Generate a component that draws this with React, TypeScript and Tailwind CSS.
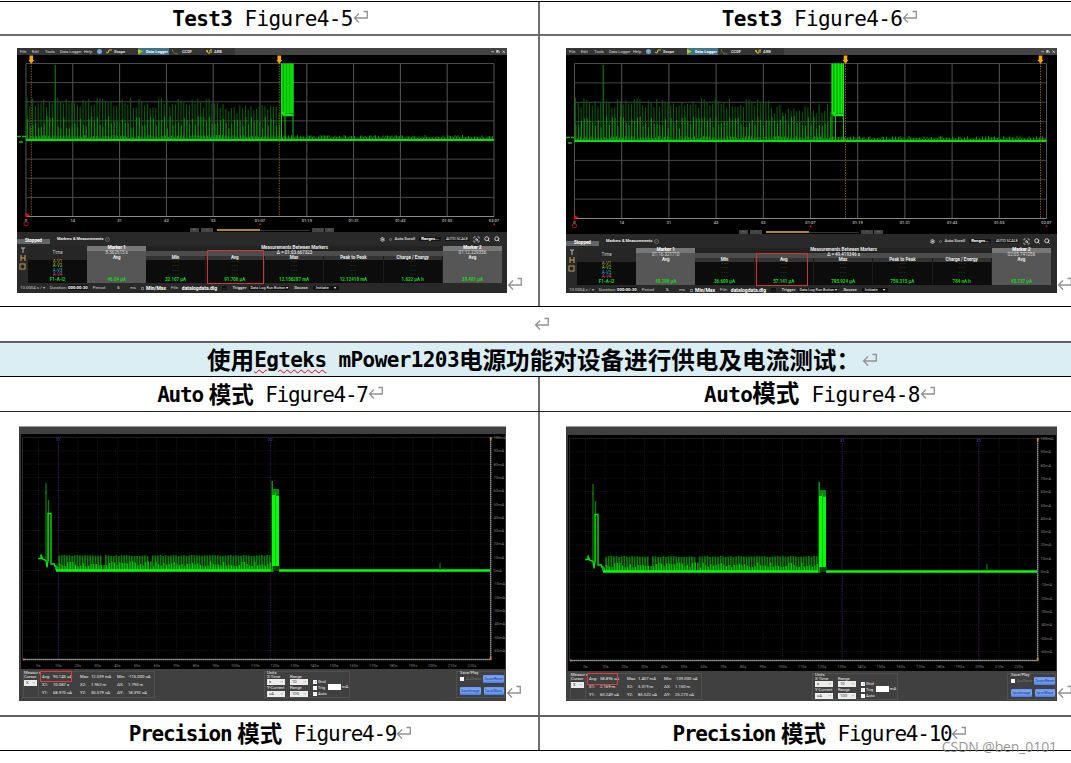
import type { ReactNode } from "react";
import { Search, Settings, ChevronDown, Minus, Copy, X, ScanSearch } from "lucide-react";

// Small deterministic generator so the traces look the same on every load
function noise(seed: number) {
  let s = seed;
  return () => {
    s = (s * 16807) % 2147483647;
    return s / 2147483647;
  };
}

function ReturnMark({ className = "" }: { className?: string }) {
  return (
    <svg width="16" height="14" viewBox="0 0 16 14" className={`shrink-0 ${className}`}>
      <path
        d="M10.5 1.5h3.8v6.5H1.5M6 3.5L1.5 8L6 12.5"
        fill="none"
        stroke="#929292"
        strokeWidth="1.3"
      />
    </svg>
  );
}

interface TextProps {
  children: ReactNode;
  bold?: boolean;
  tight?: boolean;
}

function Mono({ children, bold = false, tight = false }: TextProps) {
  return (
    <span
      className={`whitespace-pre font-['DejaVu_Sans_Mono','Noto_Sans_CJK_SC',monospace] text-[21px] ${
        tight ? "tracking-[-1.25px]" : "tracking-[-0.6px]"
      } ${bold ? "font-bold" : ""}`}
    >
      {children}
    </span>
  );
}

function Han({ children, tight = false }: TextProps) {
  return (
    <span
      className={`font-['Noto_Sans_CJK_SC',sans-serif] font-bold ${
        tight ? "text-[22.5px]" : "text-[23.6px]"
      }`}
    >
      {children}
    </span>
  );
}

interface CaptionProps {
  name: string;
  mode?: boolean;
  gap?: boolean;
  figure: string;
}

function Caption({ name, mode, gap, figure }: CaptionProps) {
  return (
    <div className="flex h-full items-center justify-center pt-0.5 leading-none text-black">
      <Mono bold tight={gap}>
        {name}
      </Mono>
      {mode && (
        <span className={`-mt-1 ${gap ? "ml-1.5" : ""}`}>
          <Han tight={gap}>模式</Han>
        </span>
      )}
      <Mono tight={gap}> {figure}</Mono>
      <ReturnMark className="-mt-1" />
    </div>
  );
}

/* ---------- Data logger ---------- */

interface LoggerProps {
  wide?: boolean;
  left: number;
  right: number;
  bottom: number;
  markers: number[];
  spike: number;
  burst: number;
  seed: number;
  time1: string;
  time2: string;
  delta: string;
  values: string[];
}

const timeLabels = ["0", "14", "31", "42", "53", "01:07", "01:19", "01:31", "01:42", "01:55", "02:07"];

function LoggerPlot({ wide, left, right, bottom, markers, spike, burst, seed }: LoggerProps) {
  const width = wide ? 491 : 490;
  const height = wide ? 173 : 171;
  const top = 8.5;
  const base = wide ? 86 : 85;
  const colStep = (right - left) / 10;
  const rowStep = (bottom - top) / 8;
  const rand = noise(seed);

  let tall = "";
  let short = "";
  let floor = "";
  for (let x = left + 1; x < burst; x += 2.8) {
    const edge = x > burst - 60 ? 6 : 0;
    tall += `M${x.toFixed(1)} ${base}V${(43 + edge + rand() * 10).toFixed(1)}`;
    short += `M${(x + 0.4).toFixed(1)} ${base}V${(61 + rand() * 13).toFixed(1)}`;
  }
  for (let x = left; x < right; x += 1.5) {
    floor += `M${x.toFixed(1)} ${base}v${(-2 - rand() * 3).toFixed(1)}`;
  }

  return (
    <svg width={width} height={height} className="block shrink-0 bg-black">
      {Array.from({ length: 11 }, (_, i) => (
        <line
          key={`c${i}`}
          x1={left + i * colStep}
          x2={left + i * colStep}
          y1={top}
          y2={bottom}
          stroke="#555"
          strokeWidth="1"
        />
      ))}
      {Array.from({ length: 9 }, (_, i) => (
        <line
          key={`r${i}`}
          x1={left}
          x2={right}
          y1={top + i * rowStep}
          y2={top + i * rowStep}
          stroke={i === 8 ? "#888" : "#484848"}
          strokeWidth="1"
        />
      ))}
      <path d={tall} stroke="#075c07" strokeWidth="1.1" />
      <path d={short} stroke="#0a940a" strokeWidth="1" />
      <path d={floor} stroke="#0b980b" strokeWidth="1" />
      <path d={`M${spike} ${base}V10`} stroke="#087808" strokeWidth="1.2" />
      <path d={`M${left} ${base}H${right}`} stroke="#0edb0e" strokeWidth="2" />
      <path
        d={`M0 ${base - 3.5}H${left}M2 ${base + 2}h5`}
        stroke="#10b510"
        strokeWidth="1.5"
        strokeDasharray="4 1"
      />
      <rect x={burst} y={top} width="12.5" height="50" fill="#08b808" />
      <path
        d={[0.7, 4, 7, 10, 12].map((d) => `M${burst + d} ${top}v50`).join("")}
        stroke="#0cf20c"
        strokeWidth="1.1"
      />
      <path d={`M${burst} 58.5h3v1.5h9.5`} fill="none" stroke="#08ec08" strokeWidth="2.5" />
      <path
        d={`M${burst + 0.5} 59V${base}M${burst + 4} 59V${base}M${burst + 12} 59V${base}`}
        stroke="#08c908"
        strokeWidth="1"
      />
      {markers.map((x) => (
        <g key={x}>
          <path d={`M${x} 8V${bottom}`} stroke="#965c08" strokeWidth="1" strokeDasharray="1.4 1.2" />
          <path d={`M${x - 1.8} 0.5h3.6v4.5h1.2L${x} 8.8L${x - 3} 5h1.2z`} fill="#f5a313" />
        </g>
      ))}
      <path d={`M${left - 0.5} ${bottom - 3.5}l4.5 2.5l-4.5 2z`} fill="#f00" />
      {timeLabels.map((t, i) => (
        <text
          key={t}
          x={left + i * colStep}
          y={bottom + 5}
          fontSize="4"
          fontWeight="bold"
          textAnchor="middle"
          fill="#aaa"
        >
          {t}
        </text>
      ))}
      <rect x={left - 2} y={bottom + 5.5} width="4" height="3.5" rx="1" fill="none" stroke="#a51414" />
      <rect x={left + 5 * colStep - 0.7} y={bottom + 7} width="1.6" height="1.6" fill="#e11" />
      <rect x={right - 0.7} y={bottom + 7} width="1.6" height="1.6" fill="#e11" />
    </svg>
  );
}

function MenuBar() {
  return (
    <div className="flex h-[7px] shrink-0 items-center whitespace-nowrap bg-[#444] text-[4px] leading-none text-[#ddd]">
      <div className="flex h-full w-[218px] shrink-0 items-center bg-[#343434] pl-[3px]">
        <span className="w-3">File</span>
        <span className="w-[13px]">Edit</span>
        <span className="w-[15px]">Tools</span>
        <span className="w-[24px]">Data Logger</span>
        <span className="w-[13px]">Help</span>
        <span className="size-[5px] rounded-full bg-[#6eacd2]" />
        <svg width="6" height="5" className="ml-1">
          <path d="M0 3l2 1l1-3h3" stroke="#d5c622" fill="none" />
        </svg>
        <span className="ml-0.5 w-[24px] font-bold">Scope</span>
        <div className="flex h-full w-[31px] items-center bg-[#427487] font-bold text-white">
          <svg width="5" height="5" className="mr-[3px]">
            <path d="M0 0l5 2.5l-5 2.5z" fill="#b4cc20" />
          </svg>
          Data Logger
        </div>
        <svg width="6" height="6" className="ml-[3px] mr-1">
          <path d="M0 0q1 5 6 5" stroke="#777c1a" fill="none" />
        </svg>
        <span className="w-6 font-bold">CCDF</span>
        <svg width="6" height="5" className="mr-0.5">
          <path d="M0 3l1-2l1 3h2v-3h2v3" stroke="#d5c622" fill="none" />
        </svg>
        <span className="font-bold">ARB</span>
      </div>
      <div className="ml-auto flex gap-[2px] pr-[2px] text-white">
        <Minus size={3.5} strokeWidth={4} />
        <Copy size={3.5} strokeWidth={4} />
        <X size={3.5} strokeWidth={4} />
      </div>
    </div>
  );
}

function ScrollStrip() {
  return (
    <div className="flex h-[6px] shrink-0 items-center bg-black pl-[173px] pt-[2px] text-[4px] leading-none text-[#aaa]">
      <span className="h-[4px] w-[9px] bg-[#444] text-center">‹‹</span>
      <span className="ml-0.5 h-[4px] w-[12px] bg-[#444] text-center">‹</span>
      <span className="ml-1 h-[2px] w-[43px] bg-[#b08a18]" />
      <span className="h-px w-[50px] bg-[#333]" />
      <span className="ml-[2px] h-[4px] w-[12px] bg-[#444] text-center">›</span>
      <span className="ml-px h-[4px] w-[9px] bg-[#444] text-center">››</span>
    </div>
  );
}

const channels = [
  { label: "A-V1", text: "text-[#c99d22]", dash: "text-[#7c6416]" },
  { label: "A-V2", text: "text-[#83d928]", dash: "text-[#527f16]" },
  { label: "A-V3", text: "text-[#29aed2]", dash: "text-[#18748c]" },
  { label: "A-V4", text: "text-[#d04d9c]", dash: "text-[#7b2b58]" },
];

const measureColumns = ["Min", "Avg", "Max", "Peak to Peak", "Charge / Energy"];

function ValueColumn({ title, value, shade }: { title: string; value: string; shade?: boolean }) {
  return (
    <div className={`flex flex-1 flex-col items-center ${shade ? "" : "border-r border-[#1c1c1c]"}`}>
      <div className={`h-[4.5px] w-full text-center font-bold text-[#eee] ${shade ? "" : "bg-[#333]"}`}>
        {title}
      </div>
      {channels.map((c) => (
        <div key={c.label} className={`h-[4.4px] ${shade ? "text-transparent" : c.dash}`}>
          - - -
        </div>
      ))}
      <div className="h-[4.6px] font-bold text-[#15d815]">{value}</div>
    </div>
  );
}

function MarkerColumn({ name, time, value }: { name: string; time: string; value: string }) {
  return (
    <div className="flex w-[59.2px] flex-col bg-[#565656]">
      <div className="h-[5px] bg-[#777] text-center font-bold text-white">{name}</div>
      <div className="h-[4.5px] text-center text-[#ddd]">{time}</div>
      <ValueColumn title="Avg" value={value} shade />
    </div>
  );
}

function MeasurePanel({ wide, time1, time2, delta, values }: LoggerProps) {
  return (
    <div className="flex h-[61px] shrink-0 flex-col whitespace-nowrap bg-[#292929] text-[4.5px] leading-[4.5px] text-[#ccc]">
      <div className="flex h-[14px] shrink-0 items-center">
        <span className="mt-1 h-[5px] w-[33px] bg-[#656565] text-center font-bold text-white">Stopped</span>
        <span className="ml-[7px] text-[4px] font-bold text-[#eee]">Markers &amp; Measurements</span>
        <ChevronDown size={5} className="ml-0.5 rounded-full border border-[#666]" />
        <div className="ml-auto flex items-center gap-[4px] pr-[7px] text-[4.2px]">
          <Settings size={5} strokeWidth={4} />
          <span className="size-[3px] rounded-full border border-[#777]" />
          <span className="-ml-0.5 font-bold">Auto Scroll</span>
          <span className="bg-[#151515] px-[2px] font-bold text-white">Ranges...</span>
          <span className="bg-[#151515] px-px text-[3.8px] text-white">AUTO SCALE</span>
          <ScanSearch size={7} strokeWidth={3} />
          <Search size={6} strokeWidth={4} />
          <Search size={6} strokeWidth={4} />
        </div>
      </div>
      <div className="flex h-[37px] shrink-0">
        <div className="flex w-[11px] flex-col items-center justify-around pb-3">
          <svg width="6" height="6">
            <path d="M1 1h4M3 1v5" stroke="#bbb" />
          </svg>
          <svg width="6" height="6">
            <path d="M1 0v6M5 0v6M1 3h4" stroke="#c8a05a" />
          </svg>
          <svg width="7" height="7">
            <rect x="1" y="1" width="5" height="5" fill="#222" stroke="#b89b60" />
          </svg>
        </div>
        <div className="flex w-[474px] bg-[#0c0c0c]">
          <div className="flex w-[59.2px] flex-col items-center">
            <div className="h-[14px] w-full bg-[#262626] pt-[5px] text-center">Time</div>
            {channels.map((c) => (
              <div key={c.label} className={`h-[4.4px] ${c.text}`}>
                {c.label}
              </div>
            ))}
            <div className="font-bold text-[#15d815]">F1-A-I2</div>
          </div>
          <MarkerColumn name="Marker 1" time={time1} value={values[0]} />
          <div className="flex flex-1 flex-col">
            <div className="h-[5px] bg-[#222] text-center font-bold text-[#eee]">
              Measurements Between Markers
            </div>
            <div className="h-[4.5px] bg-[#4c4c4c] text-center text-white">Δ = {delta}</div>
            <div className="flex">
              {measureColumns.map((m, i) => (
                <ValueColumn key={m} title={m} value={values[i + 1]} />
              ))}
            </div>
          </div>
          <MarkerColumn name="Marker 2" time={time2} value={values[6]} />
        </div>
      </div>
      <div className="flex h-[10px] shrink-0 items-center gap-[5px] pl-[3px] text-[4.3px]">
        <span>10.0004 x / ▾</span>
        <span>
          Duration: <b className="bg-[#111] text-white">000:00:30</b>
        </span>
        <span>Period:</span>
        <span className="w-[14px] text-center text-white">5</span>
        <span>ms</span>
        <span className="size-[3px] border border-[#777]" />
        <b className="-ml-[3px] text-[5px] text-white">Min/Max</b>
        <span>File:</span>
        <b className="-ml-0.5 text-[5px] text-white">datalogdata.dlg</b>
        <span className="bg-[#111] px-px">...</span>
        <span className="font-bold">Trigger</span>
        <span className="-ml-0.5 bg-[#111] px-px text-[3.8px] text-white">Data Log Run Button ▾</span>
        <span className="font-bold">Source</span>
        <span className="bg-[#111] px-[3px] text-white">
          Initiate <span className="pl-[4px]">▾</span>
        </span>
      </div>
      {/* Highlight around the average */}
      <div
        className={`absolute border border-[#d03434] ${
          wide
            ? "left-[190px] top-[205px] h-[33px] w-[52px]"
            : "left-[190px] top-[202px] h-[34px] w-[57px]"
        }`}
      />
    </div>
  );
}

function DataLogger(props: LoggerProps) {
  return (
    <div
      className={`relative flex h-[245px] shrink-0 flex-col overflow-hidden bg-[#292929] font-[Roboto,sans-serif] ${
        props.wide ? "w-[491px]" : "w-[490px]"
      }`}
    >
      <MenuBar />
      <LoggerPlot {...props} />
      <ScrollStrip />
      <MeasurePanel {...props} />
    </div>
  );
}

/* ---------- mPower1203 ---------- */

interface PowerProps {
  wide?: boolean;
  markers: number[];
  readings: string[][];
}

function PowerPlot({ wide, markers }: PowerProps) {
  const width = wide ? 491 : 487;
  const rand = noise(91);
  const zero = 136.5;

  let comb = "";
  let low = "";
  for (let x = 37.5; x < 252; x += 2.6) {
    if (rand() > 0.04) comb += `M${x.toFixed(1)} ${zero}V${(121 + rand()).toFixed(1)}`;
    low += `M${(x + 0.8).toFixed(1)} ${zero}V${(127.5 + rand() * 5).toFixed(1)}`;
  }

  return (
    <svg width={width} height={wide ? 236 : 235} className="block shrink-0 bg-[#383838]">
      <rect x="2" y="0" width={width - 3} height="236" fill="#000" />
      <path d={`M3.5 226V3.5H${wide ? 485 : 482}`} fill="none" stroke="#262626" />
      {Array.from({ length: 23 }, (_, i) => (
        <g key={i}>
          <line
            x1={19.5 + i * 19.7}
            x2={19.5 + i * 19.7}
            y1="4"
            y2="225"
            stroke="#141414"
            strokeDasharray="1 1"
          />
          <text x={19.5 + i * 19.7} y="233" fontSize="4" textAnchor="middle" fill="#808080">
            {i * 10}s
          </text>
        </g>
      ))}
      {Array.from({ length: 17 }, (_, i) => (
        <g key={i}>
          <line
            x1="4"
            x2="471"
            y1={3.5 + i * 13.3}
            y2={3.5 + i * 13.3}
            stroke="#141414"
            strokeDasharray="1 1"
          />
          <text x="474.5" y={5 + i * 13.3} fontSize="4" fill="#808080">
            {100 - i * 10}mA
          </text>
        </g>
      ))}
      {markers.map((x, i) => (
        <g key={x}>
          <path d={`M${x} 8V225`} stroke="#34104f" strokeWidth="1" strokeDasharray="1.5 1" />
          <text x={x} y="7" fontSize="3.6" fontWeight="bold" textAnchor="middle" fill="#5a2296">
            X{i + 1}
          </text>
        </g>
      ))}
      <path d="M471.7 4V225.5H4" fill="none" stroke="#777" strokeWidth="1" />
      <path
        d="M471.7 4V225.5H4"
        fill="none"
        stroke="#aaa"
        strokeWidth="1.8"
        strokeDasharray="0.6 1.4"
      />
      <path d="M471.7 3v3M471.7 223v3M4 225.5h2" stroke="#e88410" strokeWidth="1.6" />
      <path d={comb} stroke="#078007" strokeWidth="1.7" />
      <path d={low} stroke="#05c805" strokeWidth="1.3" />
      <path d="M27 127V57M29.5 127V75" stroke="#087a08" strokeWidth="1.3" />
      <path d="M27 60V49M29.5 76V66" stroke="#087a08" strokeWidth="1.3" />
      <path
        d="M19 124.5h3v-4l1.5 4.5l3.5 1.5l1 7l1-7V79.5h3V130h3.5v2h1.5v4"
        fill="none"
        stroke="#05df05"
        strokeWidth="1.4"
      />
      <path d={`M37 ${zero}H252.5M260 ${zero}H471`} stroke="#00ff00" strokeWidth="2.6" />
      <path d="M253.2 138V47" stroke="#07b307" strokeWidth="1.3" />
      <rect x="254" y="55" width="6" height="11" fill="#078707" />
      <rect x="253" y="61" width="3" height="71" fill="#00ff00" />
      <rect x="257" y="62" width="3" height="70" fill="#00ff00" />
      <rect x="256" y="58" width="1" height="74" fill="#08b908" />
      <path d="M254 138v-6M256 137v-5M258 137v-5M260 137v-6" stroke="#08a808" strokeWidth="0.8" />
      <path d="M421 136v-7M426 136v-2" stroke="#089008" strokeWidth="1" />
    </svg>
  );
}

function Select({ value, className = "w-[18px]" }: { value: string; className?: string }) {
  return (
    <div className={`flex h-[6px] items-center justify-between bg-[#ececec] px-[2px] text-[#333] ${className}`}>
      {value}
      <ChevronDown size={3.5} />
    </div>
  );
}

function BlueButton({ children }: { children: ReactNode }) {
  return (
    <div className="flex h-[8px] w-[21px] items-center justify-center rounded-[1px] bg-gradient-to-b from-[#6796f3] via-[#82acff] to-[#477be9] text-[3.8px] text-[#172c68]">
      {children}
    </div>
  );
}

function PowerControls({ wide, readings }: PowerProps) {
  return (
    <div className="relative flex h-[32px] shrink-0 justify-between whitespace-nowrap bg-[#404040] px-[4px] pt-[2px] text-[4.2px] leading-[4px] text-[#eee]">
      <div className="flex h-[27px] w-[132px] border border-[#505050]">
        <div className="w-[14px]">
          <div className="-mt-px">Measure</div>
          <div>Cursor</div>
          <Select value="X" className="mt-px w-[13px]" />
        </div>
        <div className="grid flex-1 grid-cols-[38px_37px_1fr] grid-rows-3 items-center border-l border-[#505050] pl-[3px] pt-px">
          {readings.map(([name, value]) => (
            <div key={name} className="flex">
              <span className="w-[11px]">{name}:</span>
              <span>{value}</span>
            </div>
          ))}
        </div>
      </div>
      <div
        className={`flex h-[27px] w-[86px] gap-[5px] border border-[#505050] px-[2px] ${
          wide ? "ml-px" : "ml-[3px]"
        }`}
      >
        <div>
          <div className="-mt-px h-[3px]">Units</div>
          <div className="h-[5px] pt-px">X-Time</div>
          <Select value="s" />
          <div className="h-[6px] pt-px">Y-Current</div>
          <Select value="uA" />
        </div>
        <div className="pt-[2px]">
          <div className="h-[5px] pt-px">Range</div>
          <Select value="10" />
          <div className="h-[6px] pt-px">Range</div>
          <Select value="100" />
        </div>
        <div className="flex flex-col justify-end gap-[2px] pb-px">
          {["Grid", "Trig", "Auto"].map((name) => (
            <div key={name} className="flex items-center gap-px">
              <span className="flex size-[4px] items-center justify-center bg-white text-[4px] text-[#3355bb]">
                {name === "Grid" ? "✓" : ""}
              </span>
              {name}
            </div>
          ))}
        </div>
        <div className="-ml-1 flex items-center pt-1">
          <span className="mr-px h-[6px] w-[13px] bg-white" />
          mA
        </div>
      </div>
      <div className="-mr-[3px] h-[27px] w-[49px] border border-[#505050] pl-[3px]">
        <div className="-mt-px h-[3px]">Save/Play</div>
        <div className="flex items-center pt-px">
          <span className="mr-[2px] size-[4px] bg-white" />
          <span className="w-[18px] text-[#737373]">AutSave</span>
          <BlueButton>ZoomReset</BlueButton>
        </div>
        <div className="flex gap-[3px] pt-[4px]">
          <BlueButton>SaveImage</BlueButton>
          <BlueButton>SaveWave</BlueButton>
        </div>
      </div>
      <div
        className={`absolute border border-[#e03a3a] ${
          wide ? "left-[21px] top-[2px] h-[12px] w-[31px]" : "left-[21px] top-[2px] h-[11px] w-[32px]"
        }`}
      />
    </div>
  );
}

function PowerScope(props: PowerProps) {
  return (
    <div
      className={`flex h-[275px] shrink-0 flex-col overflow-hidden bg-[#404040] font-[Roboto,sans-serif] ${
        props.wide ? "w-[491px]" : "w-[487px]"
      }`}
    >
      <div className={`shrink-0 border-t border-[#999] bg-[#404040] ${props.wide ? "h-[9px]" : "h-[8px]"}`} />
      <PowerPlot {...props} />
      <PowerControls {...props} />
    </div>
  );
}

/* ---------- Document ---------- */

function Row({ left, right, className }: { left: ReactNode; right: ReactNode; className: string }) {
  return (
    <div className={`flex shrink-0 ${className}`}>
      <div className="w-[540px] shrink-0 border-r-2 border-[#6d6d6d] pl-[3px]">{left}</div>
      <div className="w-[560px] shrink-0">{right}</div>
    </div>
  );
}

export default function App() {
  return (
    <div className="relative flex h-[763px] w-[1071px] flex-col overflow-hidden bg-white pt-px">
      <Row
        className="h-[35px] border-b-2 border-t border-b-[#6d6d6d] border-t-black"
        left={<Caption name="Test3" figure="Figure4-5" />}
        right={<Caption name="Test3" figure="Figure4-6" />}
      />
      <Row
        className="h-[271px] border-b border-black"
        left={
          <div className="flex items-end pl-[14px] pt-3">
            <DataLogger
              left={9}
              right={477}
              bottom={161.5}
              markers={[14.3, 262.3]}
              spike={38.3}
              burst={264}
              seed={17}
              time1="8.562615 s"
              time2="01:12.229356"
              delta="01:03.667323"
              values={["46.04 µA", "32.107 µA", "91.706 µA", "12.156287 mA", "12.12418 mA", "1.622 µA h", "38.481 µA"]}
            />
            <ReturnMark className="mb-0.5" />
          </div>
        }
        right={
          <div className="flex items-end pl-[26px] pt-3">
            <DataLogger
              wide
              left={8.5}
              right={480.5}
              bottom={163.5}
              markers={[279.5, 474.5]}
              spike={37.3}
              burst={265.5}
              seed={43}
              time1="01:16.321710"
              time2="02:05.741056"
              delta="49.419346 s"
              values={["45.299 µA", "36.609 µA", "57.141 µA", "795.924 µA", "759.315 µA", "784 nA h", "45.737 µA"]}
            />
            <ReturnMark className="mb-0.5" />
          </div>
        }
      />
      <div className="flex h-[34px] shrink-0 items-center justify-center pl-[13px]">
        <ReturnMark />
      </div>
      <div className="flex h-[36px] shrink-0 items-center border-b border-t-2 border-b-black border-t-[#606060] bg-[#daeef3] pl-[207px] leading-none text-black">
        <Han>使用</Han>
        <span className="mt-0.5 underline decoration-red-600 decoration-wavy decoration-1 underline-offset-2">
          <Mono bold>Egteks</Mono>
        </span>
        <span className="mt-0.5">
          <Mono bold> mPower1203</Mono>
        </span>
        <Han>电源功能对设备进行供电及电流测试：</Han>
        <ReturnMark className="ml-0.5" />
      </div>
      <Row
        className="h-[35px] border-b border-[#222]"
        left={<Caption name="Auto" mode gap figure="Figure4-7" />}
        right={<Caption name="Auto" mode figure="Figure4-8" />}
      />
      <Row
        className="h-[305px] border-b-2 border-[#606060]"
        left={
          <div className="flex items-end pl-4 pt-[14px]">
            <PowerScope
              markers={[39.5, 251.5]}
              readings={[
                ["Avg", "95.145 uA"],
                ["Max", "12.039 mA"],
                ["Min", "-115.000 uA"],
                ["X1", "10.087 s"],
                ["X2", "1.962 m"],
                ["ΔX", "1.790 m"],
                ["Y1", "68.970 uA"],
                ["Y2", "50.579 uA"],
                ["ΔY", "18.392 uA"],
              ]}
            />
            <ReturnMark className="mb-0.5" />
          </div>
        }
        right={
          <div className="flex items-end pl-[26px] pt-[14px]">
            <PowerScope
              wide
              markers={[276.4, 412.6]}
              readings={[
                ["Avg", "58.896 uA"],
                ["Max", "1.407 mA"],
                ["Min", "-139.000 uA"],
                ["X1", "2.169 m"],
                ["X2", "3.319 m"],
                ["ΔX", "1.150 m"],
                ["Y1", "60.249 uA"],
                ["Y2", "85.522 uA"],
                ["ΔY", "25.273 uA"],
              ]}
            />
            <ReturnMark className="mb-0.5" />
          </div>
        }
      />
      <Row
        className="h-[34px] border-b border-black"
        left={<Caption name="Precision" mode gap figure="Figure4-9" />}
        right={<Caption name="Precision" mode gap figure="Figure4-10" />}
      />
      <div className="absolute bottom-[8px] right-[14px] font-['Open_Sans',sans-serif] text-[14px] leading-4 tracking-[-0.1px] text-[#888]/90">
        CSDN @ben_0101
      </div>
    </div>
  );
}
